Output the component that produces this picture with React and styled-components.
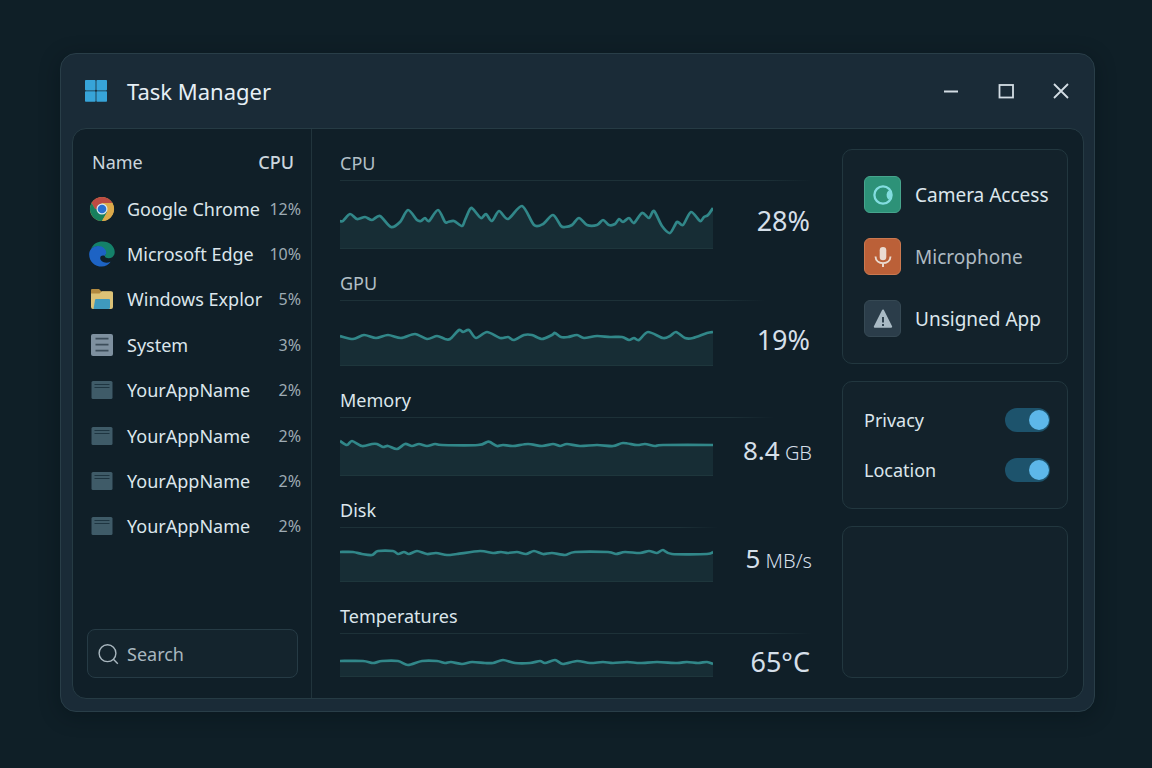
import React from "react";
import styled, { createGlobalStyle } from "styled-components";

const GlobalStyle = createGlobalStyle`
  *, *::before, *::after { box-sizing: border-box; }
  body {
    margin: 0;
    background: #0f1f27;
    color: #dce6ec;
    font-family: "Noto Sans", "Open Sans", sans-serif;
    font-size: 18px;
    line-height: 24px;
  }
  h1, h2, p, ul { margin: 0; padding: 0; font-weight: 400; }
  button, input { font: inherit; color: inherit; }
`;

const Desktop = styled.div`
  display: flex;
  flex-direction: column;
  min-height: 100vh;
  padding: 53px 57px 55px 60px;
`;

const Window = styled.main`
  padding: 0 10px 12px 11px;
  border: 1px solid #293e48;
  border-radius: 16px;
  background: #1a2b37;
  box-shadow: 0 4px 20px rgba(4, 14, 20, 0.4);
`;

const TitleBar = styled.header`
  display: flex;
  align-items: center;
  gap: 20px;
  height: 74px;
  padding: 0 7px 0 13px;
`;

const Title = styled.h1`
  flex: 1;
  font-size: 22px;
  line-height: 30px;
  color: #e6eff5;
`;

const WindowControls = styled.div`
  display: flex;
  gap: 23px;
`;

const ControlButton = styled.button`
  display: grid;
  place-items: center;
  width: 32px;
  height: 32px;
  padding: 0;
  border: 0;
  border-radius: 6px;
  background: transparent;
  color: #d3dde4;
`;

const Content = styled.div`
  display: grid;
  grid-template-columns: 239px minmax(0, 1fr) 241px;
  border: 1px solid #263b44;
  border-radius: 14px;
  background: #101f28;
`;

const Sidebar = styled.section`
  display: flex;
  flex-direction: column;
  justify-content: space-between;
  padding: 9px 13px 20px 14px;
  border-right: 1px solid #21343c;
`;

const ProcessTable = styled.table`
  align-self: flex-start;
  table-layout: fixed;
  width: 212px;
  height: 411px;
  margin-left: 2px;
  border-collapse: collapse;
`;

const HeadCell = styled.th`
  width: ${(p) => (p.$end ? "44px" : "auto")};
  height: 48px;
  padding: ${(p) => (p.$end ? "0 7px 0 0" : "0 0 0 3px")};
  font-weight: ${(p) => (p.$end ? 500 : 400)};
  text-align: ${(p) => (p.$end ? "right" : "left")};
  color: #cbd6dd;
`;

const NameCell = styled.td`
  padding: 0;
  white-space: nowrap;
`;

const ProcessName = styled.div`
  display: flex;
  align-items: center;
  gap: 12px;

  svg { flex: none; }
`;

const UsageCell = styled.td`
  padding: 0;
  font-size: 16px;
  text-align: right;
  color: #9eabb3;
`;

const SearchBox = styled.label`
  display: flex;
  align-items: center;
  gap: 8px;
  height: 49px;
  padding: 0 10px;
  border: 1px solid #263b45;
  border-radius: 8px;
  background: #14242d;
  color: #a9b7bf;

  svg { flex: none; }
`;

const SearchInput = styled.input`
  min-width: 0;
  width: 100%;
  padding: 0;
  border: 0;
  outline: 0;
  background: transparent;

  &::placeholder { color: #a9b7bf; opacity: 1; }
`;

const Metrics = styled.section`
  display: flex;
  flex-direction: column;
  gap: 22px;
  padding: 22px 30px 21px 28px;
`;

const Metric = styled.article`
  display: grid;
  grid-template-columns: minmax(0, 1fr) 99px;
`;

const MetricTitle = styled.h2`
  grid-column: 1 / -1;
  padding-bottom: 5px;
  font-size: 18px;
  line-height: 24px;
  color: ${(p) => (p.$muted ? "#b3c0c7" : "#dce6ec")};
`;

const Rule = styled.div`
  grid-column: 1 / -1;
  width: ${(p) => p.$extent}%;
  height: 1px;
  background: linear-gradient(to right, #1d3138 90%, transparent);
`;

const Chart = styled.svg`
  display: block;
  width: 100%;
  height: ${(p) => p.$height}px;
  border-bottom: 1px solid #1e363c;
`;

const Reading = styled.p`
  align-self: center;
  padding-top: ${(p) => (p.$compact ? 8 : 12)}px;
  padding-right: ${(p) => (p.$compact ? 0 : 2)}px;
  font-size: ${(p) => (p.$compact ? 26 : 27)}px;
  font-weight: 400;
  line-height: 30px;
  text-align: right;
  white-space: nowrap;
  color: #d5dfe9;
`;

const Unit = styled.span`
  font-size: 20px;
  font-weight: 300;
`;

const SidePanels = styled.aside`
  display: flex;
  flex-direction: column;
  gap: 17px;
  padding: 20px 15px 20px 0;
`;

const Panel = styled.section`
  display: flex;
  flex-direction: column;
  flex: ${(p) => (p.$fill ? 1 : "none")};
  gap: ${(p) => p.$gap || 0}px;
  padding: ${(p) => (p.$fill ? "0" : "26px 17px 26px 21px")};
  border: 1px solid #22373f;
  border-radius: 10px;
  background: #13222b;
`;

const Permission = styled.div`
  display: flex;
  align-items: center;
  gap: 14px;
  font-size: 19px;
  white-space: nowrap;
  color: ${(p) => (p.$muted ? "#aebac2" : "#dce6ec")};
`;

const tones = {
  green: ["#2d9278", "#47a58d"],
  orange: ["#bb6038", "#cb7950"],
  slate: ["#2b3d4a", "#364954"],
};

const Badge = styled.span`
  display: grid;
  flex: none;
  place-items: center;
  width: 37px;
  height: 37px;
  border: 1px solid ${(p) => tones[p.$tone][1]};
  border-radius: 6px;
  background: ${(p) => tones[p.$tone][0]};
`;

const ToggleRow = styled.label`
  display: flex;
  align-items: center;
  justify-content: space-between;
`;

const Switch = styled.input`
  appearance: none;
  display: flex;
  align-items: center;
  width: 45px;
  height: 24px;
  margin: 0;
  padding: 0 1px 0 2px;
  border-radius: 12px;
  background: #2b3d4a;

  &::before {
    content: "";
    width: 20px;
    height: 20px;
    border-radius: 50%;
    background: #5db7e9;
  }

  &:checked {
    justify-content: flex-end;
    background: #1d536c;
  }
`;

const WindowsLogo = () => (
  <svg width="22" height="22" viewBox="0 0 22 22" fill="#37a4d8" aria-hidden="true">
    <rect width="10.6" height="10.4" rx="0.8" />
    <rect x="11.4" width="10.6" height="10.4" rx="0.8" />
    <rect y="11.2" width="10.6" height="10.6" rx="0.8" />
    <rect x="11.4" y="11.2" width="10.6" height="10.6" rx="0.8" />
  </svg>
);

const ChromeIcon = () => (
  <svg width="26" height="26" viewBox="0 0 26 26" aria-hidden="true">
    <circle cx="13" cy="13" r="12" fill="#dba94a" />
    <path d="M2.6 7A12 12 0 0 1 23.4 7H13L7.8 16Z" fill="#bd4b43" />
    <path d="M2.6 7A12 12 0 0 0 13 25L18.2 16L13 13H6.2Z" fill="#177f5d" />
    <path d="M13 25L18.2 16L15 7H23.4A12 12 0 0 1 13 25Z" fill="#dba94a" />
    <circle cx="13" cy="13" r="5.5" fill="#dce8ee" />
    <circle cx="13" cy="13" r="4.3" fill="#2970d2" />
  </svg>
);

const EdgeIcon = () => (
  <svg width="26" height="26" viewBox="0 0 26 26" aria-hidden="true">
    <path
      d="M2 8C4 3 8.400 .6 13.600 .6C20.500 .6 25.700 5.400 25.700 11C25.700 15 22.900 17.300 19.700 17.300C17 17.300 15.700 16.200 15.800 14.900C17.500 12.200 15.500 6 8.700 5.600C5.500 5.600 3.300 6.700 2 8Z"
      fill="#14816a"
    />
    <path
      d="M.2 12.500C.6 8 4.500 5 9 5C14.500 5 17.400 8.800 17.200 12.100C17 13.600 16 13.800 15.600 15C14 14 11.400 14.500 11.200 17C11.100 20.500 16 23.300 21.600 20.800C19.800 23.900 16.300 25.600 12.800 25.600C5.600 25.600 -.3 20 .2 12.500Z"
      fill="#1d63c4"
    />
  </svg>
);

const FolderIcon = () => (
  <svg width="26" height="26" viewBox="0 0 26 26" aria-hidden="true">
    <path d="M2 4Q2 3 3 3H10L12.500 5.500H22V12H2Z" fill="#b28a40" />
    <path d="M2 7.500H10.500L13 5.200H22.500Q24 5.200 24 6.700V21Q24 23 22 23H4Q2 23 2 21Z" fill="#dcc276" />
    <path d="M7 13H20Q21 13 21 14V21.500Q21 23 19.500 23H4.500L6 14Q6.200 13 7 13Z" fill="#3f9abd" />
  </svg>
);

const SystemIcon = () => (
  <svg width="26" height="26" viewBox="0 0 26 26" aria-hidden="true">
    <rect x="2" y="2" width="22" height="22" rx="2" fill="#7e909f" />
    <path d="M6.500 6.700H19.500M6.500 12.700H19.500M6.500 18.700H19.500" stroke="#3c4d5a" strokeWidth="1.700" />
  </svg>
);

const AppIcon = () => (
  <svg width="26" height="26" viewBox="0 0 26 26" aria-hidden="true">
    <rect x="2.500" y="4" width="21" height="18" rx="1.500" fill="#3f5b68" />
    <path d="M5.500 7.500H20.500M5.500 10.500H20.500" stroke="#1e3541" strokeWidth="1.200" />
  </svg>
);

const SearchIcon = () => (
  <svg width="21" height="22" viewBox="0 0 21 22" fill="none" stroke="#a9b7bf" strokeWidth="1.400" aria-hidden="true">
    <circle cx="9.500" cy="10.200" r="8.400" />
    <path d="M15.400 16.200L19.800 20.800" />
  </svg>
);

const CameraIcon = () => (
  <svg width="22" height="22" viewBox="0 0 22 22" aria-hidden="true">
    <circle cx="11" cy="11" r="8.600" fill="none" stroke="#83dde0" strokeWidth="2.300" />
    <path d="M17 6.400C13.800 7.800 13.800 14.200 17 15.600Q20 13 19.500 10Q19 7.500 17 6.400Z" fill="#83dde0" />
  </svg>
);

const MicIcon = () => (
  <svg width="22" height="24" viewBox="0 0 22 24" aria-hidden="true">
    <rect x="7.700" y="2" width="6.600" height="13.200" rx="3.300" fill="#eadbd1" />
    <path d="M3.500 11.500C3.700 20.300 18.300 20.300 18.500 11.500M11 18V22" fill="none" stroke="#eadbd1" strokeWidth="1.900" />
  </svg>
);

const WarningIcon = () => (
  <svg width="22" height="22" viewBox="0 0 22 22" aria-hidden="true">
    <path d="M11 2.500L19.200 18.700H2.800Z" fill="#a9bac4" stroke="#a9bac4" strokeWidth="2" strokeLinejoin="round" />
    <path d="M11 9V14.500M11 16V18" stroke="#2b3d4a" strokeWidth="1.900" />
  </svg>
);

const processes = [
  ["Google Chrome", "12%", ChromeIcon],
  ["Microsoft Edge", "10%", EdgeIcon],
  ["Windows Explor", "5%", FolderIcon],
  ["System", "3%", SystemIcon],
  ["YourAppName", "2%", AppIcon],
  ["YourAppName", "2%", AppIcon],
  ["YourAppName", "2%", AppIcon],
  ["YourAppName", "2%", AppIcon],
];

const metrics = [
  {
    title: "CPU", value: "28%", muted: true, height: 68, extent: 100,
    points: "0,40 3,40 10,33 17,38 25,36 32,39 40,35 51,46 60,41 68,29 77,39 81,40 85,37 89,40 98,29 105,41 108,41 114,40 122,45 125,39 130,28 133,28 141,37 146,33 152,40 159,30 168,38 182,25 194,44 203,43 213,34 221,45 225,46 232,44 239,37 247,44 257,44 263,39 269,44 275,43 279,38 283,41 289,37 294,42 302,32 309,37 314,30 322,45 330,52 337,41 343,44 351,31 360,40 364,36 368,34 373,27",
  },
  {
    title: "GPU", value: "19%", muted: true, height: 65, extent: 90,
    points: "0,35 13,38 24,34 36,37 48,34 61,37 75,33 87,38 97,35 105,38 110,38 119,29 123,31 129,29 136,37 147,31 160,37 168,36 174,39 184,34 192,34 202,38 212,34 215,32 221,36 228,36 237,34 244,37 257,35 270,36 282,36 289,39 294,37 299,39 308,31 323,37 330,35 336,31 345,37 353,37 367,32 373,31",
  },
  {
    title: "Memory", value: "8.4", unit: "GB", height: 58, extent: 92,
    points: "0,23 7,27 12,23 22,28 32,26 37,26 43,29 48,28 57,31 65,26 72,28 79,26 87,28 95,26 102,27 138,27 147,24 150,24 157,28 163,27 173,28 188,26 202,28 213,26 220,28 227,26 240,28 257,27 273,28 283,25 297,27 305,26 315,28 323,27 373,27",
  },
  {
    title: "Disk", value: "5", unit: "MB/s", height: 54, extent: 80,
    points: "0,24 13,24 22,26 32,27 38,23 53,23 58,26 64,24 69,26 77,23 87,26 96,25 107,27 117,26 140,23 153,25 161,24 168,25 177,24 186,26 194,23 203,26 212,25 225,27 235,24 268,24 276,26 285,24 300,25 309,23 317,25 323,22 332,26 367,26 373,24",
  },
  {
    title: "Temperatures", value: "65°C", height: 43, extent: 100,
    points: "0,27 23,27 33,29 42,27 58,27 68,31 82,27 97,27 105,29 111,28 122,30 132,28 145,29 153,29 163,26 175,29 190,29 200,27 205,29 215,26 223,30 237,27 250,29 263,28 273,29 287,28 300,29 317,28 337,29 347,28 358,29 367,28 373,30",
  },
];

/* Joins the samples with a Catmull-Rom spline written as cubic segments. */
function smoothPath(samples) {
  const pts = samples.split(" ").map((s) => s.split(",").map(Number));
  let d = `M${pts[0]}`;
  for (let i = 0; i < pts.length - 1; i++) {
    const a = pts[i - 1] || pts[i];
    const b = pts[i];
    const c = pts[i + 1];
    const e = pts[i + 2] || c;
    const k = 7;
    d += `C${b[0] + (c[0] - a[0]) / k},${b[1] + (c[1] - a[1]) / k} ${c[0] - (e[0] - b[0]) / k},${c[1] - (e[1] - b[1]) / k} ${c}`;
  }
  return d;
}

function MetricChart({ title, points, height }) {
  const line = smoothPath(points);
  return (
    <Chart $height={height} viewBox={`0 0 373 ${height - 1}`} preserveAspectRatio="none" role="img" aria-label={`${title} history`}>
      <path d={`${line}V${height}H0Z`} fill="#172d35" />
      <path d={line} fill="none" stroke="#318789" strokeWidth="2.7" strokeLinejoin="round" vectorEffect="non-scaling-stroke" />
    </Chart>
  );
}

export default function App() {
  return (
    <Desktop>
      <GlobalStyle />
      <Window>
        <TitleBar>
          <WindowsLogo />
          <Title>Task Manager</Title>
          <WindowControls>
            <ControlButton aria-label="Minimize">
              <svg width="20" height="20" fill="none" stroke="currentColor" strokeWidth="2"><path d="M3 10.500H17" /></svg>
            </ControlButton>
            <ControlButton aria-label="Maximize">
              <svg width="20" height="20" fill="none" stroke="currentColor" strokeWidth="1.800"><rect x="3.500" y="4" width="13.500" height="12.500" /></svg>
            </ControlButton>
            <ControlButton aria-label="Close">
              <svg width="20" height="20" fill="none" stroke="currentColor" strokeWidth="1.800"><path d="M3 3L17 17M17 3L3 17" /></svg>
            </ControlButton>
          </WindowControls>
        </TitleBar>
        <Content>
          <Sidebar>
            <ProcessTable>
              <thead>
                <tr>
                  <HeadCell scope="col">Name</HeadCell>
                  <HeadCell scope="col" $end>CPU</HeadCell>
                </tr>
              </thead>
              <tbody>
                {processes.map(([name, usage, Icon], i) => (
                  <tr key={i}>
                    <NameCell><ProcessName><Icon />{name}</ProcessName></NameCell>
                    <UsageCell>{usage}</UsageCell>
                  </tr>
                ))}
              </tbody>
            </ProcessTable>
            <SearchBox>
              <SearchIcon />
              <SearchInput type="text" placeholder="Search" aria-label="Search" />
            </SearchBox>
          </Sidebar>
          <Metrics>
            {metrics.map((m) => (
              <Metric key={m.title}>
                <MetricTitle $muted={m.muted}>{m.title}</MetricTitle>
                <Rule $extent={m.extent} />
                <MetricChart title={m.title} points={m.points} height={m.height} />
                <Reading $compact={Boolean(m.unit)}>
                  {m.value}
                  {m.unit && <Unit> {m.unit}</Unit>}
                </Reading>
              </Metric>
            ))}
          </Metrics>
          <SidePanels>
            <Panel $gap={25}>
              <Permission><Badge $tone="green"><CameraIcon /></Badge>Camera Access</Permission>
              <Permission $muted><Badge $tone="orange"><MicIcon /></Badge>Microphone</Permission>
              <Permission><Badge $tone="slate"><WarningIcon /></Badge>Unsigned App</Permission>
            </Panel>
            <Panel $gap={26}>
              <ToggleRow>Privacy<Switch type="checkbox" role="switch" defaultChecked /></ToggleRow>
              <ToggleRow>Location<Switch type="checkbox" role="switch" defaultChecked /></ToggleRow>
            </Panel>
            <Panel $fill />
          </SidePanels>
        </Content>
      </Window>
    </Desktop>
  );
}
